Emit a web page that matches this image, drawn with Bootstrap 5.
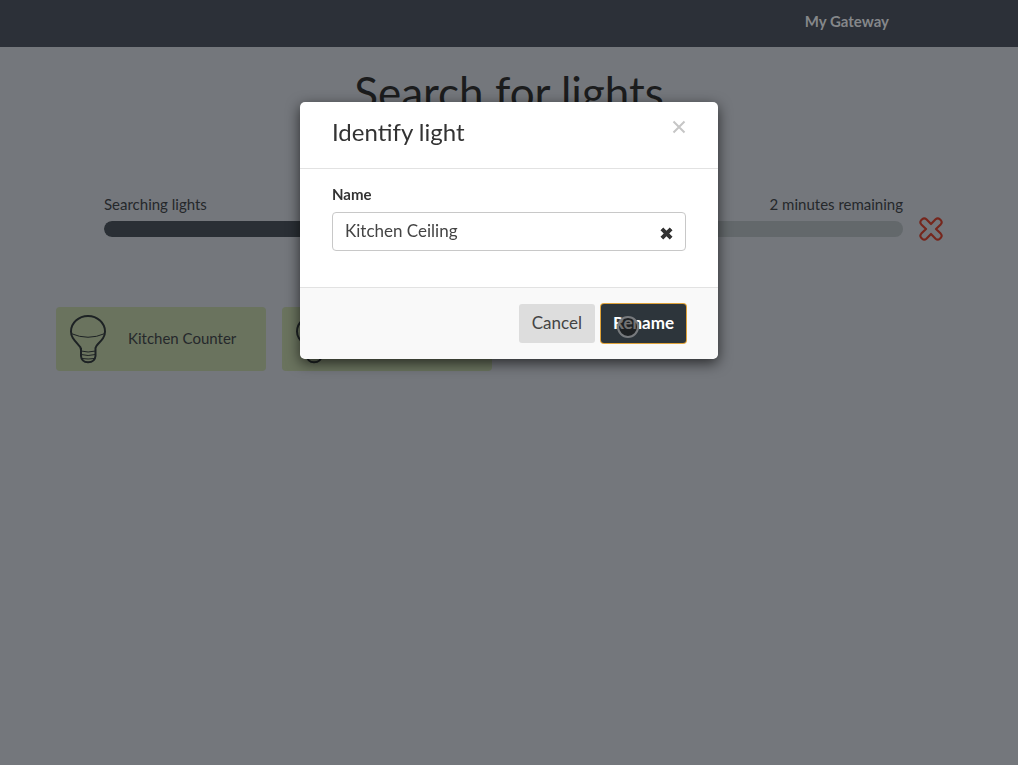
<!DOCTYPE html>
<html lang="en">
<head>
<meta charset="utf-8">
<meta name="viewport" content="width=device-width, initial-scale=1">
<title>Search for lights</title>
<link rel="stylesheet" href="https://cdn.jsdelivr.net/npm/bootstrap@5.3.0/dist/css/bootstrap.min.css">
<style>
body { font-family: Lato, sans-serif; font-size: 15px; line-height: 20px; background: #74777c; color: #25282b; min-height: 100vh; }
.topbar { background: #2c3038; height: 47px; padding-right: 129px; }
.topbar a { color: #85878a; font-weight: 700; font-size: 15px; line-height: 20px; padding: 11px 0 16px; }
.page-title { font-size: 44px; line-height: 50px; color: #1b1c1d; margin: 20px 0 77px; }
.search-row { padding: 0 75px 0 104px; gap: 16px; }
.search-bar { --bs-progress-height: 16px; --bs-progress-bg: #63686b; --bs-progress-bar-bg: #2a2f35; --bs-progress-border-radius: 8px; margin-top: 7px; }
.stop-btn { width: 24px; height: 24px; margin-bottom: -4px; }
.light-list { padding: 70px 56px 0; gap: 16px; }
.light-tile { width: 210px; height: 64px; background: #6a735e; color: #25282b; border-radius: 4px; padding: 0 13px; gap: 21px; font-size: 15px; line-height: 20px; }
.light-tile span { padding-bottom: 3px; }
.rename-modal { padding-top: 102px; overflow: hidden; }
.rename-modal .modal-dialog { max-width: 418px; margin: 0 auto; }
.rename-modal .modal-content { border: 0; border-radius: 5px; overflow: hidden; box-shadow: 0 4px 14px rgba(0,0,0,.65); color: #333; }
.rename-modal .modal-header { padding: 15px 32px 21px; border-color: #e2e2e2; align-items: flex-start; }
.rename-modal .modal-title { font-size: 24px; line-height: 30px; font-weight: 400; }
.close-x { color: #c6c6c6; line-height: 0; margin-top: 3px; }
.rename-modal .modal-body { padding: 15px 32px 36px; }
.name-label { font-weight: 700; font-size: 15px; line-height: 20px; margin-bottom: 8px; }
.name-input { height: 39px; border: 1px solid #c8c8c8; border-radius: 4px; padding: 0 40px 2px 12px; font-size: 17px; color: #444; }
.clear-btn { right: 13px; top: 15px; line-height: 0; color: #333; }
.rename-modal .modal-footer { padding: 16px 32px; gap: 6px; background: #f9f9f9; border-color: #e2e2e2; }
.rename-modal .modal-footer .btn { margin: 0; height: 39px; border: 0; border-radius: 3px; padding: 0 13px 1px; font-size: 17px; line-height: 38px; }
.rename-modal .btn-cancel, .rename-modal .btn-cancel:hover { background: #ddd; color: #444; }
.rename-modal .modal-footer .btn-rename, .rename-modal .btn-rename:hover { background: #2d353b; color: #fff; font-weight: 700; padding: 0 12px 1px; box-shadow: 0 0 0 1px #e0a33a; }
.tap-ring { left: 16px; top: 12px; width: 22px; height: 22px; border: 2px solid #777a7d; border-radius: 50%; background: rgba(20,20,20,.6); }
</style>
</head>
<body>
<header class="topbar d-flex justify-content-end">
  <a class="text-decoration-none" href="#">My Gateway</a>
</header>
<main>
  <h1 class="page-title text-center fw-normal">Search for lights</h1>
  <section class="search-row d-flex align-items-end">
    <div class="flex-grow-1">
      <div class="d-flex justify-content-between"><span>Searching lights</span><span>2 minutes remaining</span></div>
      <div class="progress search-bar" role="progressbar" aria-label="Searching lights" aria-valuenow="40" aria-valuemin="0" aria-valuemax="100">
        <div class="progress-bar rounded-pill" style="width:40%"></div>
      </div>
    </div>
    <button class="stop-btn btn border-0 p-0 d-flex" type="button" aria-label="Stop search">
      <svg width="24" height="24" viewBox="0 0 25 25" fill="none" stroke="#76261c" stroke-width="2.200" stroke-linejoin="round"><path d="M12.5 7.3 17.3 2.400Q19.500.4 21.700 2.300L22.700 3.300Q24.600 5.500 22.600 7.700L17.700 12.500 22.600 17.300Q24.600 19.500 22.700 21.700L21.700 22.700Q19.500 24.600 17.300 22.600L12.500 17.700 7.700 22.600Q5.500 24.600 3.300 22.700L2.300 21.700Q.4 19.500 2.400 17.300L7.300 12.500 2.400 7.700Q.4 5.500 2.300 3.300L3.300 2.300Q5.500.4 7.700 2.400Z"/></svg>
    </button>
  </section>
  <section class="light-list d-flex flex-wrap">
    <button class="light-tile btn border-0 d-flex align-items-center" type="button">
      <svg width="38" height="50" viewBox="0 0 38 50" fill="none" stroke="#1d2224" stroke-width="2"><path d="M12 34V42Q12.500 48 19 48.300 26 48 26.500 42V34Q27 32 29 30C33 26 36 23 36 17.500A17 15.500 0 0 0 2 17.500C2 23 5 26 9.500 31Q12 33 12 36"/><path stroke-width="1" d="M2 19.500Q19 27 36 19.500M12 37Q19 39 26.500 37M12 40.500Q19 42.500 26.500 40.500M13 44.500Q19 45.500 25.500 44.500"/></svg>
      <span>Kitchen Counter</span>
    </button>
    <button class="light-tile btn border-0 d-flex align-items-center" type="button" aria-label="Light 2">
      <svg width="38" height="50" viewBox="0 0 38 50" fill="none" stroke="#1d2224" stroke-width="2"><path d="M12 34V42Q12.500 48 19 48.300 26 48 26.500 42V34Q27 32 29 30C33 26 36 23 36 17.500A17 15.500 0 0 0 2 17.500C2 23 5 26 9.500 31Q12 33 12 36"/></svg>
    </button>
  </section>
</main>

<div class="modal rename-modal d-block" tabindex="-1" role="dialog" aria-labelledby="renameTitle">
  <div class="modal-dialog">
    <form class="modal-content">
      <div class="modal-header">
        <h2 class="modal-title" id="renameTitle">Identify light</h2>
        <button class="close-x btn border-0 p-0" type="button" aria-label="Close"><svg width="14" height="14" viewBox="0 0 14 14" stroke="currentColor" stroke-width="2"><path d="M1.500 1.500 12.500 12.500M12.500 1.500 1.500 12.500"/></svg></button>
      </div>
      <div class="modal-body">
        <label class="name-label d-block" for="lightName">Name</label>
        <div class="position-relative">
          <input class="name-input form-control" id="lightName" type="text" value="Kitchen Ceiling">
          <button class="clear-btn btn border-0 p-0 position-absolute" type="button" aria-label="Clear name"><svg width="13" height="13" viewBox="0 0 14 14" stroke="currentColor" stroke-width="4.200"><path d="M2 2 12 12M12 2 2 12"/></svg></button>
        </div>
      </div>
      <div class="modal-footer">
        <button class="btn btn-cancel" type="button">Cancel</button>
        <button class="btn btn-rename position-relative" type="submit">Rename<span class="tap-ring position-absolute"></span></button>
      </div>
    </form>
  </div>
</div>
<script src="https://cdn.jsdelivr.net/npm/bootstrap@5.3.0/dist/js/bootstrap.bundle.min.js"></script>
</body>
</html>
